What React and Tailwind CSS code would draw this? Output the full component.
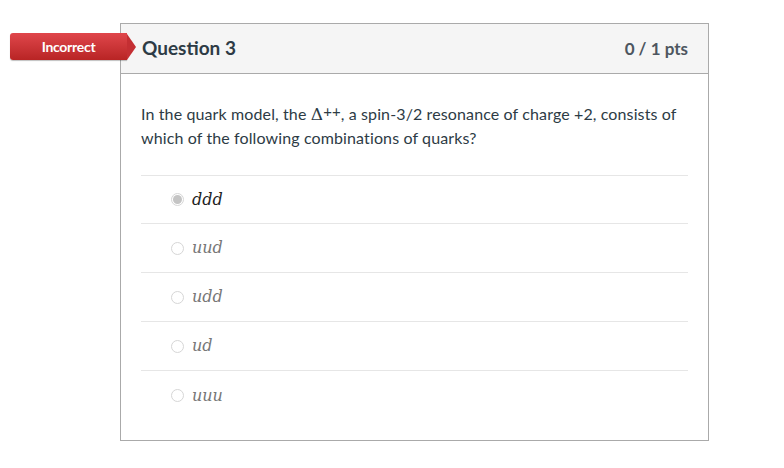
const answers = [
  { label: "ddd", selected: true },
  { label: "uud" },
  { label: "udd" },
  { label: "ud" },
  { label: "uuu" },
];

const Radio = ({ checked }) => (
  <span className="flex h-[13px] w-[13px] items-center justify-center rounded-full border border-[#d6d6d6] bg-white">
    {checked && <span className="h-[9px] w-[9px] rounded-full bg-[#c4c4c4]" />}
  </span>
);

export default function App() {
  return (
    <div className="min-h-[468px] w-[784px] bg-white pt-[23px] font-['Lato','Noto_Sans',sans-serif] text-[#2d3b45]">
      <div className="relative ml-[120px] w-[589px] border border-[#aaaaaa]">
        {/* badge */}
        <div className="absolute left-[-111px] top-[9px] flex h-[27px] items-center">
          <div className="flex h-[27px] w-[117px] items-center justify-center rounded-l-[3px] bg-gradient-to-b from-[#e0464b] to-[#b82424] text-[14px] font-bold tracking-[-0.3px] text-white shadow-[0_1px_1px_rgba(0,0,0,0.25)]">
            Incorrect
          </div>
          <div className="h-0 w-0 border-y-[13.5px] border-l-[9px] border-y-transparent border-l-[#c42f33]" />
        </div>

        <div className="flex h-[50px] items-center justify-between border-b border-[#aaaaaa] bg-[#f5f5f5] pl-[21px] pr-[20px]">
          <h2 className="text-[19px] font-bold">Question 3</h2>
          <span className="text-[17px] font-bold text-[#4d5660]">0 / 1 pts</span>
        </div>

        <div className="px-[20px] pb-[20px] pt-[28px]">
          <p className="text-[16px] leading-[24px] tracking-[0.12px]">
            <span className="block">
              In the quark model, the{" "}
              <span className="font-['DejaVu_Serif',serif] text-[17px] leading-[24px]">
                Δ<span className="relative top-[-3px] font-['Lato',sans-serif] text-[15px]">++</span>
              </span>
              , a spin-3/2 resonance of charge +2, consists of
            </span>
            <span className="block">which of the following combinations of quarks?</span>
          </p>

          <ul className="mt-[25px]">
            {answers.map((a, i) => (
              <li
                key={a.label}
                className={`flex h-[49px] items-center gap-[8px] pl-[30px] ${i < answers.length - 1 ? "border-b" : ""} border-[#e6e6e6] ${i === 0 ? "border-t" : ""}`}
              >
                <Radio checked={a.selected} />
                <span
                  className={`font-['DejaVu_Serif',serif] text-[16px] italic ${a.selected ? "text-[#222]" : "text-[#777]"}`}
                >
                  {a.label}
                </span>
              </li>
            ))}
          </ul>
        </div>
      </div>
    </div>
  );
}
